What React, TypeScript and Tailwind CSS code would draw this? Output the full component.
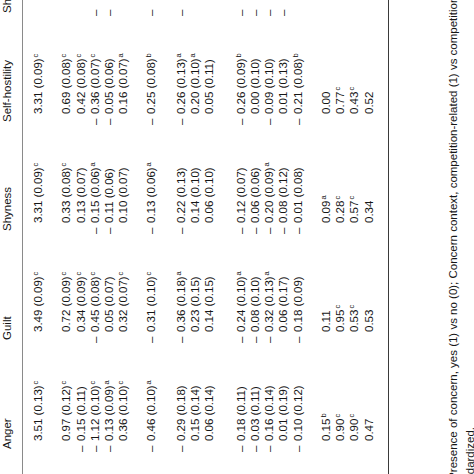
import React from "react";

type Cell = { n?: boolean; v: string; s?: string } | null;

const c = (raw: string): Cell => {
  let s: string | undefined;
  let t = raw;
  const m = t.match(/\^(\w)$/);
  if (m) {
    s = m[1];
    t = t.slice(0, -2);
  }
  let n = false;
  if (t.startsWith("-")) {
    n = true;
    t = t.slice(1);
  }
  return { n, v: t, s };
};

function Val({ cell }: { cell: Cell }) {
  if (!cell) return null;
  return (
    <span className="flex items-baseline whitespace-nowrap">
      <span className="w-[11px] shrink-0">{cell.n ? "–" : ""}</span>
      <span>{cell.v}</span>
      {cell.s && <span className="text-[7.5px] relative -top-[4px] ml-[1px]">{cell.s}</span>}
    </span>
  );
}

function Row({ cells, sh, mt }: { cells: string[]; sh?: boolean; mt?: string }) {
  return (
    <div className={`flex h-[14.25px] leading-[14.25px] shrink-0 ${mt ?? ""}`}>
      <div className="w-[22px] shrink-0" />
      {cells.map((x, i) => (
        <div key={i} className="w-[109px] shrink-0">
          <Val cell={c(x)} />
        </div>
      ))}
      <div className="w-[60px] shrink-0">{sh ? "–" : ""}</div>
    </div>
  );
}

export default function App() {
  return (
    <div className="w-[474px] h-[474px] overflow-hidden bg-white">
      <div
        className="w-[474px] h-[474px] -rotate-90 flex flex-col text-[#161616] text-[11.5px]"
        style={{ fontFamily: '"Liberation Sans", Arial, sans-serif' }}
      >
        <div className="flex h-[14px] leading-[14px] shrink-0">
          <div className="w-[22px] shrink-0" />
          <div className="w-[109px] shrink-0 pl-[3px]">Anger</div>
          <div className="w-[109px] shrink-0 pl-[3px]">Guilt</div>
          <div className="w-[109px] shrink-0 pl-[3px]">Shyness</div>
          <div className="w-[109px] shrink-0 pl-[3px]">Self-hostility</div>
          <div className="w-[60px] shrink-0 pl-[3px]">Shame</div>
        </div>
        <div className="mt-[8px] h-px w-full bg-[#8a8a8a] shrink-0" />

        <Row mt="mt-[8px]" cells={["3.51 (0.13)^c", "3.49 (0.09)^c", "3.31 (0.09)^c", "3.31 (0.09)^c"]} />

        <Row mt="mt-[14px]" cells={["0.97 (0.12)^c", "0.72 (0.09)^c", "0.33 (0.08)^c", "0.69 (0.08)^c"]} />
        <Row cells={["-0.15 (0.11)", "0.34 (0.09)^c", "0.13 (0.07)", "0.42 (0.08)^c"]} />
        <Row sh cells={["-1.12 (0.10)^c", "-0.45 (0.08)^c", "-0.15 (0.06)^a", "-0.36 (0.07)^c"]} />
        <Row sh cells={["-0.13 (0.09)^a", "0.05 (0.07)", "-0.11 (0.06)", "-0.05 (0.06)"]} />
        <Row cells={["0.36 (0.10)^c", "0.32 (0.07)^c", "0.10 (0.07)", "0.16 (0.07)^a"]} />

        <Row sh mt="mt-[13px]" cells={["-0.46 (0.10)^a", "-0.31 (0.10)^c", "-0.13 (0.06)^a", "-0.25 (0.08)^b"]} />

        <Row sh mt="mt-[16px]" cells={["-0.29 (0.18)", "-0.36 (0.18)^a", "-0.22 (0.13)", "-0.26 (0.13)^a"]} />
        <Row cells={["0.15 (0.14)", "0.23 (0.15)", "0.14 (0.10)", "0.20 (0.10)^a"]} />
        <Row cells={["0.06 (0.14)", "0.14 (0.15)", "0.06 (0.10)", "0.05 (0.11)"]} />

        <Row sh mt="mt-[17px]" cells={["-0.18 (0.11)", "-0.24 (0.10)^a", "-0.12 (0.07)", "-0.26 (0.09)^b"]} />
        <Row sh cells={["-0.03 (0.11)", "-0.08 (0.10)", "-0.06 (0.06)", "0.00 (0.10)"]} />
        <Row sh cells={["-0.16 (0.14)", "-0.32 (0.13)^a", "-0.20 (0.09)^a", "-0.09 (0.10)"]} />
        <Row sh cells={["0.01 (0.19)", "0.06 (0.17)", "-0.08 (0.12)", "0.01 (0.13)"]} />
        <Row cells={["-0.10 (0.12)", "-0.18 (0.09)", "-0.01 (0.08)", "-0.21 (0.08)^b"]} />

        <Row mt="mt-[14px]" cells={["0.15^b", "0.11", "0.09^a", "0.00"]} />
        <Row cells={["0.90^c", "0.95^c", "0.28^c", "0.77^c"]} />
        <Row cells={["0.90^c", "0.53^c", "0.57^c", "0.43^c"]} />
        <Row cells={["0.47", "0.53", "0.34", "0.52"]} />

        <div className="mt-[12px] h-px w-full bg-[#3a3a3a] shrink-0" />

        <div className="mt-[57px] leading-[14px] whitespace-nowrap shrink-0 -ml-[10px]">
          <span className="text-[7.5px] relative -top-[4px]">a</span>Presence of concern, yes (1) vs no (0); Concern context, competition-related (1) vs competition-unrelated (0).
        </div>
        <div className="mt-[1px] leading-[14px] whitespace-nowrap shrink-0 -ml-[22px]">standardized.</div>
      </div>
    </div>
  );
}
